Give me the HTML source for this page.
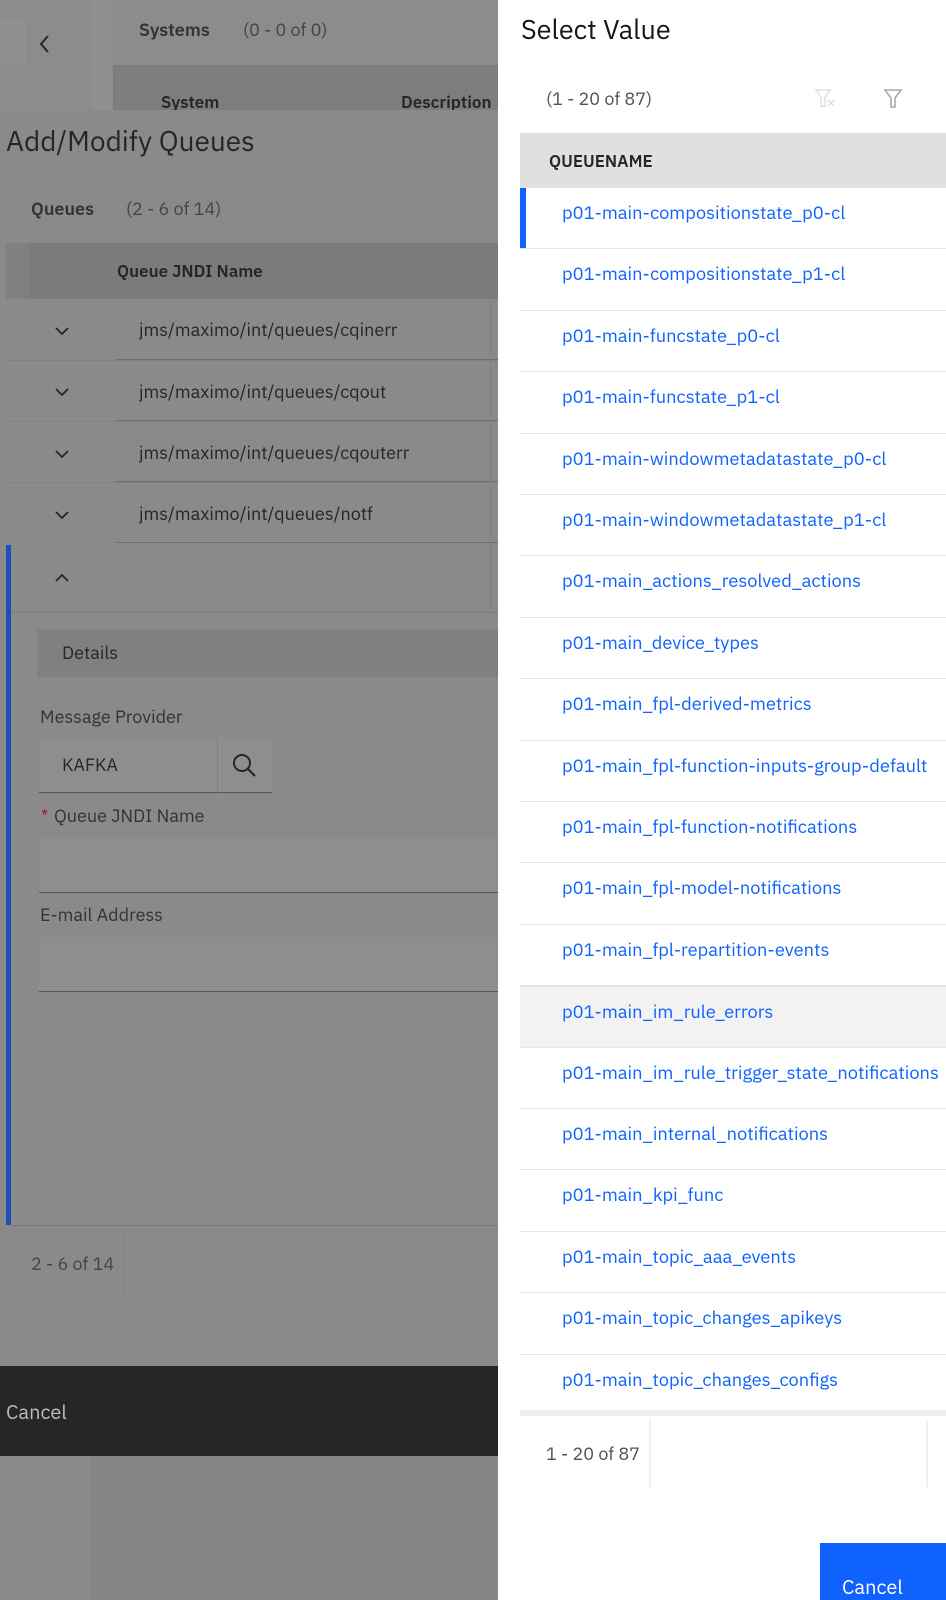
<!DOCTYPE html>
<html><head><meta charset="utf-8"><style>
*{margin:0;padding:0;box-sizing:border-box}
body{width:946px;height:1600px;overflow:hidden;position:relative;background:#8a8a8a;font-family:"IBM Plex Sans","Liberation Sans",sans-serif;}
.a{position:absolute;white-space:nowrap}
.t{color:#262626;font-size:18px}
.row{position:absolute;left:520px;width:426px;height:61.4px;border-bottom:1px solid #e6e6e6}
.row span{position:absolute;left:42px;top:13px;color:#0f62fe;font-size:18.3px}
</style></head><body>
<div class="a" style="left:0;top:0;width:498px;height:110px;background:#8c8c8c"></div>
<div class="a" style="left:0;top:20px;width:26px;height:45px;background:#909090"></div>
<div class="a" style="left:92px;top:0;width:20px;height:110px;background:#909090"></div>
<div class="a" style="left:113px;top:65px;width:385px;height:45px;background:#7d7d7d"></div>
<svg class="a" style="left:38px;top:34px" width="14" height="20"><path d="M10 2 L3 10 L10 18" fill="none" stroke="#262626" stroke-width="2"/></svg>
<div class="a t" style="left:139px;top:18px;font-weight:600;color:#333">Systems</div>
<div class="a t" style="left:243px;top:18px;color:#444">(0 - 0 of 0)</div>
<div class="a t" style="left:161px;top:91px;font-weight:600;font-size:17px">System</div>
<div class="a t" style="left:401px;top:91px;font-weight:600;font-size:17px">Description</div>
<div class="a" style="left:0;top:110px;width:498px;height:1256px;background:#8a8a8a"></div>
<div class="a" style="left:6px;top:122px;font-size:28px;color:#262626">Add/Modify Queues</div>
<div class="a t" style="left:31px;top:197px;font-weight:600;color:#333">Queues</div>
<div class="a t" style="left:126px;top:197px;color:#444">(2 - 6 of 14)</div>
<div class="a" style="left:6px;top:243px;width:492px;height:56px;background:#7b7b7b"></div>
<div class="a" style="left:6px;top:243px;width:24px;height:56px;background:#808080"></div>
<div class="a t" style="left:117px;top:260px;font-weight:600;font-size:17px">Queue JNDI Name</div>
<div class="a" style="left:6px;top:299px;width:492px;height:244px">
 <div class="a" style="left:110px;top:60px;width:382px;height:1px;background:#6e6e6e"></div>
 <div class="a" style="left:0;top:61px;width:492px;height:1px;background:#828282"></div>
 <div class="a" style="left:110px;top:121px;width:382px;height:1px;background:#6e6e6e"></div>
 <div class="a" style="left:0;top:122px;width:492px;height:1px;background:#828282"></div>
 <div class="a" style="left:110px;top:182px;width:382px;height:1px;background:#6e6e6e"></div>
 <div class="a" style="left:0;top:183px;width:492px;height:1px;background:#828282"></div>
 <div class="a" style="left:110px;top:243px;width:382px;height:1px;background:#6e6e6e"></div>
</div>
<div class="a" style="left:490px;top:299px;width:1px;height:310px;background:#808080"></div>
<svg class="a" style="left:54px;top:326px" width="16" height="10"><path d="M2 2 L8 8 L14 2" fill="none" stroke="#262626" stroke-width="1.8"/></svg>
<svg class="a" style="left:54px;top:387px" width="16" height="10"><path d="M2 2 L8 8 L14 2" fill="none" stroke="#262626" stroke-width="1.8"/></svg>
<svg class="a" style="left:54px;top:449px" width="16" height="10"><path d="M2 2 L8 8 L14 2" fill="none" stroke="#262626" stroke-width="1.8"/></svg>
<svg class="a" style="left:54px;top:510px" width="16" height="10"><path d="M2 2 L8 8 L14 2" fill="none" stroke="#262626" stroke-width="1.8"/></svg>
<div class="a t" style="left:139px;top:318px">jms/maximo/int/queues/cqinerr</div>
<div class="a t" style="left:139px;top:380px">jms/maximo/int/queues/cqout</div>
<div class="a t" style="left:139px;top:441px">jms/maximo/int/queues/cqouterr</div>
<div class="a t" style="left:139px;top:502px">jms/maximo/int/queues/notf</div>
<div class="a" style="left:6px;top:545px;width:5px;height:680px;background:#1e4fb8"></div>
<svg class="a" style="left:54px;top:573px" width="16" height="10"><path d="M2 8 L8 2 L14 8" fill="none" stroke="#262626" stroke-width="1.8"/></svg>
<div class="a" style="left:11px;top:612px;width:487px;height:1px;background:#7e7e7e"></div>
<div class="a" style="left:37px;top:629px;width:461px;height:48px;background:#808080"></div>
<div class="a t" style="left:62px;top:641px">Details</div>
<div class="a t" style="left:40px;top:705px;color:#333">Message Provider</div>
<div class="a" style="left:39px;top:738px;width:178px;height:55px;background:#8e8e8e;border-bottom:1px solid #555"></div>
<div class="a" style="left:217px;top:738px;width:55px;height:55px;background:#8e8e8e;border-bottom:1px solid #555;border-left:1px solid #7e7e7e"></div>
<svg class="a" style="left:231px;top:752px" width="28" height="28"><circle cx="11" cy="11" r="8" fill="none" stroke="#262626" stroke-width="2"/><path d="M17 17 L24 24" stroke="#262626" stroke-width="2.2"/></svg>
<div class="a t" style="left:62px;top:753px">KAFKA</div>
<div class="a" style="left:41px;top:806px;color:#b01020;font-size:16px">*</div>
<div class="a t" style="left:54px;top:804px;color:#333">Queue JNDI Name</div>
<div class="a" style="left:39px;top:838px;width:459px;height:55px;background:#8e8e8e;border-bottom:1px solid #555"></div>
<div class="a t" style="left:40px;top:903px;color:#333">E-mail Address</div>
<div class="a" style="left:39px;top:937px;width:459px;height:55px;background:#8e8e8e;border-bottom:1px solid #555"></div>
<div class="a" style="left:11px;top:1225px;width:487px;height:1px;background:#777"></div>
<div class="a t" style="left:31px;top:1252px;color:#444">2 - 6 of 14</div>
<div class="a" style="left:124px;top:1230px;width:1px;height:67px;background:#828282"></div>
<div class="a" style="left:0;top:1366px;width:498px;height:90px;background:#262626"></div>
<div class="a" style="left:6px;top:1398px;color:#bdbdbd;font-size:20px">Cancel</div>
<div class="a" style="left:0;top:1456px;width:91px;height:144px;background:#8a8a8a"></div>
<div class="a" style="left:91px;top:1456px;width:407px;height:144px;background:#858585"></div>
<div class="a" style="left:498px;top:0;width:448px;height:1600px;background:#fff"></div>
<div class="a" style="left:521px;top:12px;font-size:27px;color:#161616">Select Value</div>
<div class="a" style="left:546px;top:87px;font-size:18px;color:#525252">(1 - 20 of 87)</div>
<svg class="a" style="left:814px;top:88px" width="24" height="22"><path d="M2 2 H16 L11 9 V18 H7 V9 Z" fill="none" stroke="#e0e0e0" stroke-width="1.5"/><path d="M14 12 L20 18 M20 12 L14 18" stroke="#e0e0e0" stroke-width="1.5"/></svg>
<svg class="a" style="left:883px;top:88px" width="22" height="22"><path d="M2 2 H18 L12 10 V19 H8 V10 Z" fill="none" stroke="#a8a8a8" stroke-width="1.6"/></svg>
<div class="a" style="left:520px;top:133px;width:426px;height:55px;background:#e0e0e0"></div>
<div class="a" style="left:549px;top:150px;font-size:17px;font-weight:600;color:#262626">QUEUENAME</div>
<div class="a" style="left:520px;top:188px;width:6px;height:60px;background:#0f62fe"></div>
<div class="row" style="top:188px"><span>p01-main-compositionstate_p0-cl</span></div>
<div class="row" style="top:249.4px"><span>p01-main-compositionstate_p1-cl</span></div>
<div class="row" style="top:310.8px"><span>p01-main-funcstate_p0-cl</span></div>
<div class="row" style="top:372.2px"><span>p01-main-funcstate_p1-cl</span></div>
<div class="row" style="top:433.6px"><span>p01-main-windowmetadatastate_p0-cl</span></div>
<div class="row" style="top:495px"><span>p01-main-windowmetadatastate_p1-cl</span></div>
<div class="row" style="top:556.4px"><span>p01-main_actions_resolved_actions</span></div>
<div class="row" style="top:617.8px"><span>p01-main_device_types</span></div>
<div class="row" style="top:679.2px"><span>p01-main_fpl-derived-metrics</span></div>
<div class="row" style="top:740.6px"><span>p01-main_fpl-function-inputs-group-default</span></div>
<div class="row" style="top:802px"><span>p01-main_fpl-function-notifications</span></div>
<div class="row" style="top:863.4px"><span>p01-main_fpl-model-notifications</span></div>
<div class="row" style="top:924.8px"><span>p01-main_fpl-repartition-events</span></div>
<div class="row" style="top:986.2px;background:#f2f2f2;border-top:1px solid #e0e0e0"><span>p01-main_im_rule_errors</span></div>
<div class="row" style="top:1047.6px"><span>p01-main_im_rule_trigger_state_notifications</span></div>
<div class="row" style="top:1109px"><span>p01-main_internal_notifications</span></div>
<div class="row" style="top:1170.4px"><span>p01-main_kpi_func</span></div>
<div class="row" style="top:1231.8px"><span>p01-main_topic_aaa_events</span></div>
<div class="row" style="top:1293.2px"><span>p01-main_topic_changes_apikeys</span></div>
<div class="row" style="top:1354.6px;border-bottom:6px solid #eee"><span>p01-main_topic_changes_configs</span></div>
<div class="a" style="left:546px;top:1442px;font-size:18px;color:#525252">1 - 20 of 87</div>
<div class="a" style="left:649px;top:1420px;width:2px;height:67px;background:#f0f0f0"></div>
<div class="a" style="left:926px;top:1420px;width:2px;height:67px;background:#f0f0f0"></div>
<div class="a" style="left:820px;top:1543px;width:126px;height:57px;background:#0f62fe"></div>
<div class="a" style="left:842px;top:1573px;font-size:20px;color:#fff">Cancel</div>
</body></html>
